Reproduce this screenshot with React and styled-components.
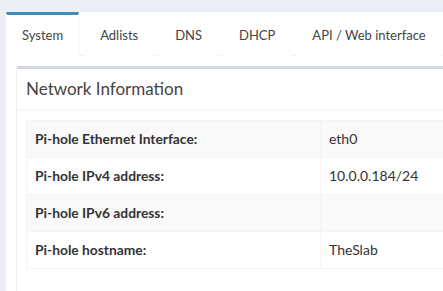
import React from "react";
import styled, { createGlobalStyle } from "styled-components";

const GlobalStyle = createGlobalStyle`
  html, body {
    margin: 0;
    padding: 0;
    background: #ecf0f5;
    overflow: hidden;
  }
  body {
    font-family: Lato, "Liberation Sans", sans-serif;
    font-size: 14px;
    color: #333;
  }
`;

const Page = styled.div`
  padding: 12px 0 0 6px;
  width: 437px;
  height: 279px;
  overflow: hidden;
`;

const TabsBox = styled.div`
  width: 640px;
  min-height: 300px;
  background: #fff;
  border-radius: 3px;
  box-shadow: 0 1px 1px rgba(0, 0, 0, 0.1);
`;

const TabBar = styled.ul`
  display: flex;
  margin: 0;
  padding: 0;
  list-style: none;
  border-bottom: 1px solid #f4f4f4;
`;

const Tab = styled.li`
  margin-right: 5px;
  margin-bottom: -1px;
  border-top: 3px solid ${(p) => (p.$active ? "#3c8dbc" : "transparent")};
  border-right: 1px solid ${(p) => (p.$active ? "#f4f4f4" : "transparent")};
  border-left: 1px solid transparent;
  background: #fff;
  padding: 10px 15px 11px;
  line-height: 20px;
  color: #444;
  font-size: 13px;
`;

const TabContent = styled.div`
  padding: 10px;
`;

const Box = styled.div`
  border-top: 3px solid #d2d6de;
  border-left: 1px solid #f0f0f0;
  border-radius: 3px;
  background: #fff;
  box-shadow: 0 1px 1px rgba(0, 0, 0, 0.1);
  min-height: 240px;
`;

const BoxHeader = styled.div`
  padding: 10px 10px 10px 9px;
  border-bottom: 1px solid #f4f4f4;
`;

const BoxTitle = styled.h3`
  margin: 0;
  font-size: 17px;
  font-weight: 400;
  line-height: 20px;
  color: #444;
`;

const BoxBody = styled.div`
  padding: 10px 10px 30px 9px;
`;

const Table = styled.table`
  border-collapse: collapse;
  width: 600px;
  border: 1px solid #f4f4f4;
`;

const Row = styled.tr`
  background: ${(p) => (p.$odd ? "#f9f9f9" : "#fff")};
`;

const Label = styled.th`
  width: 277px;
  text-align: left;
  padding: 8px;
  line-height: 20px;
  border: 1px solid #f4f4f4;
  font-weight: 700;
  font-size: 13.8px;
  color: #333;
`;

const Value = styled.td`
  padding: 8px;
  line-height: 20px;
  border: 1px solid #f4f4f4;
  font-size: 14px;
  color: #333;
`;

const tabs = ["System", "Adlists", "DNS", "DHCP", "API / Web interface"];

const rows = [
  ["Pi-hole Ethernet Interface:", "eth0"],
  ["Pi-hole IPv4 address:", "10.0.0.184/24"],
  ["Pi-hole IPv6 address:", ""],
  ["Pi-hole hostname:", "TheSlab"],
];

export default function App() {
  return (
    <>
      <GlobalStyle />
      <Page>
        <TabsBox>
          <TabBar>
            {tabs.map((t, i) => (
              <Tab key={t} $active={i === 0}>
                {t}
              </Tab>
            ))}
          </TabBar>
          <TabContent>
            <Box>
              <BoxHeader>
                <BoxTitle>Network Information</BoxTitle>
              </BoxHeader>
              <BoxBody>
                <Table>
                  <tbody>
                    {rows.map(([k, v], i) => (
                      <Row key={k} $odd={i % 2 === 0}>
                        <Label>{k}</Label>
                        <Value>{v}</Value>
                      </Row>
                    ))}
                  </tbody>
                </Table>
              </BoxBody>
            </Box>
          </TabContent>
        </TabsBox>
      </Page>
    </>
  );
}
